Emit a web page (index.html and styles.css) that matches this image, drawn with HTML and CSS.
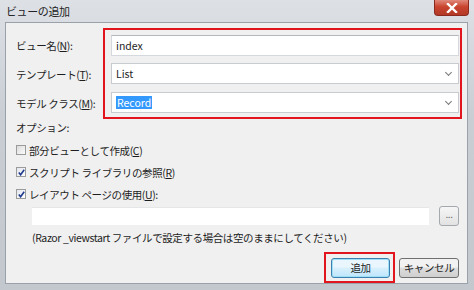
FILE: index.html
```html
<!DOCTYPE html>
<html>
<head>
<title>ビューの追加</title>
<meta charset="utf-8">
<link rel="stylesheet" href="styles.css">
</head>
<body>
    <div class="window">
        <div class="title-bar">
            <span class="title-text">ビューの追加</span>
            <div class="close-btn">
                <svg width="12" height="10" viewBox="0 0 12 10">
                    <path d="M2 1 L10 9 M10 1 L2 9" stroke="#fff" stroke-width="2.4" stroke-linecap="square"/>
                </svg>
            </div>
        </div>

        <div class="client">
            <!-- 名前・テンプレート・モデル -->
            <div class="fields">
                <div class="labels">
                    <div class="label-row">ビュー名(<u>N</u>):</div>
                    <div class="label-row">テンプレート(<u>T</u>):</div>
                    <div class="label-row">モデル クラス(<u>M</u>):</div>
                </div>
                <div class="highlight fields-box">
                    <div class="textbox">index</div>
                    <div class="combo">List<span class="chevron"></span></div>
                    <div class="combo"><span class="selected">Record</span><span class="chevron"></span></div>
                </div>
            </div>

            <div class="section-label">オプション:</div>

            <div class="check-row">
                <span class="checkbox"></span>
                <span>部分ビューとして作成(<u>C</u>)</span>
            </div>
            <div class="check-row">
                <span class="checkbox checked">
                    <svg width="7" height="7" viewBox="0 0 7 7"><path d="M0.8 3.6 L2.6 5.8 L6.2 0.8" fill="none" stroke="#1f3a8c" stroke-width="1.6"/></svg>
                </span>
                <span>スクリプト ライブラリの参照(<u>R</u>)</span>
            </div>
            <div class="check-row">
                <span class="checkbox checked">
                    <svg width="7" height="7" viewBox="0 0 7 7"><path d="M0.8 3.6 L2.6 5.8 L6.2 0.8" fill="none" stroke="#1f3a8c" stroke-width="1.6"/></svg>
                </span>
                <span>レイアウト ページの使用(<u>U</u>):</span>
            </div>

            <div class="path-row">
                <div class="path-input"></div>
                <div class="browse-btn">...</div>
            </div>

            <p class="note">(Razor _viewstart ファイルで設定する場合は空のままにしてください)</p>

            <div class="button-row">
                <div class="highlight ok-box">
                    <div class="btn btn-default">追加</div>
                </div>
                <div class="btn">キャンセル</div>
            </div>
        </div>
    </div>
</body>
</html>
```

FILE: styles.css
```css
/* ダイアログ全体 */
body {
    margin: 0;
    font-family: "Noto Sans CJK JP", "Noto Sans", sans-serif;
    font-size: 10.5px;
    letter-spacing: -0.4px;
    color: #1e1e1e;
}

.window {
    width: 474px;
    height: 290px;
    box-sizing: border-box;
    padding: 0 6px 6px 5px;
    background: linear-gradient(#dde1e6, #c9ced5 40%, #c3c8cf);
    display: flex;
    flex-direction: column;
}

/* タイトルバー */
.title-bar {
    height: 22px;
    display: flex;
    justify-content: space-between;
    align-items: flex-start;
    flex-shrink: 0;
}

.title-text {
    padding: 3px 0 0 1px;
    font-size: 11px;
    color: #222;
}

.close-btn {
    width: 35px;
    height: 16px;
    margin-right: -1px;
    background: linear-gradient(#e08a7c, #c9442f 45%, #b23a26);
    border: 1px solid #8c2a1f;
    border-top: none;
    border-radius: 0 0 4px 4px;
    box-sizing: border-box;
    display: flex;
    justify-content: center;
    align-items: center;
}

/* クライアント領域 */
.client {
    flex: 1;
    background-color: #f0f0f0;
    border: 1px solid #9ba1a8;
    display: flex;
    flex-direction: column;
}

.fields {
    display: flex;
    margin-top: 5px;
}

.labels {
    width: 87px;
    padding: 7px 0 0 10px;
    display: flex;
    flex-direction: column;
    gap: 8px;
}

.label-row {
    height: 21px;
    line-height: 21px;
    white-space: nowrap;
}

/* 赤枠 (注目) */
.highlight {
    border: 2px solid #e2151f;
}

.fields-box {
    flex: 1;
    margin-right: 5px;
    padding: 5px 1px 4px 6px;
    display: flex;
    flex-direction: column;
    gap: 7px;
}

.textbox, .combo {
    height: 21px;
    box-sizing: border-box;
    background-color: #fff;
    border: 1px solid #d5d9de;
    border-top-color: #b4b8be;
    padding-left: 4px;
    line-height: 19px;
    display: flex;
    align-items: center;
    letter-spacing: 0;
}

.combo {
    justify-content: space-between;
    border-color: #c8ccd1;
}

.combo + .combo {
    margin-top: 1px;
}

.selected {
    background-color: #3399ff;
    color: #fff;
    line-height: 13px;
    padding: 0 1px;
}

.chevron {
    width: 4px;
    height: 4px;
    margin: 0 7px 3px 0;
    border-right: 1px solid #777;
    border-bottom: 1px solid #777;
    transform: rotate(45deg);
}

/* オプション */
.section-label {
    height: 18px;
    line-height: 18px;
    padding-left: 10px;
}

.check-row {
    height: 22px;
    display: flex;
    align-items: center;
    gap: 3px;
    padding-left: 10px;
}

.section-label + .check-row {
    margin-top: 2px;
}

.checkbox {
    width: 10px;
    height: 10px;
    box-sizing: border-box;
    border: 1px solid #9a9b9b;
    background: linear-gradient(135deg, #dcdcdc, #fbfbfb);
    display: flex;
    justify-content: center;
    align-items: center;
}

.checkbox.checked {
    background: linear-gradient(135deg, #e4e6ee, #fdfdfd);
}

.path-row {
    display: flex;
    align-items: center;
    margin: 1px 8px 0 26px;
    height: 20px;
}

.path-input {
    flex: 1;
    height: 18px;
    background-color: #fff;
    border-top: 1px solid #e4e6e8;
    box-sizing: border-box;
}

.browse-btn {
    width: 20px;
    height: 20px;
    margin-left: 10px;
    box-sizing: border-box;
    border: 1px solid #a4a9ae;
    border-radius: 3px;
    background: linear-gradient(#f6f6f6, #e2e2e2);
    text-align: center;
    line-height: 14px;
    font-size: 10px;
    color: #666;
}

.note {
    margin: 4px 0 0 26px;
    height: 16px;
    line-height: 16px;
    white-space: nowrap;
}

/* ボタン */
.button-row {
    display: flex;
    justify-content: flex-end;
    align-items: flex-start;
    gap: 4px;
    margin: 6px 8px 0 0;
    flex: 1;
}

.ok-box {
    align-self: stretch;
    padding: 4px 3px 0 5px;
}

.btn {
    width: 60px;
    height: 20px;
    box-sizing: border-box;
    border: 1px solid #707070;
    border-radius: 3px;
    background: linear-gradient(#f2f2f2 45%, #dddddd 50%, #cfcfcf);
    text-align: center;
    line-height: 18px;
    margin-top: 6px;
}

.ok-box .btn {
    margin-top: 0;
    width: 59px;
}

.btn-default {
    border-color: #3c7fb1;
    box-shadow: inset 0 0 0 1px #9fe0f7;
    background: linear-gradient(#eaf6fd 45%, #d9f0fc 50%, #bee6fd);
}
```
